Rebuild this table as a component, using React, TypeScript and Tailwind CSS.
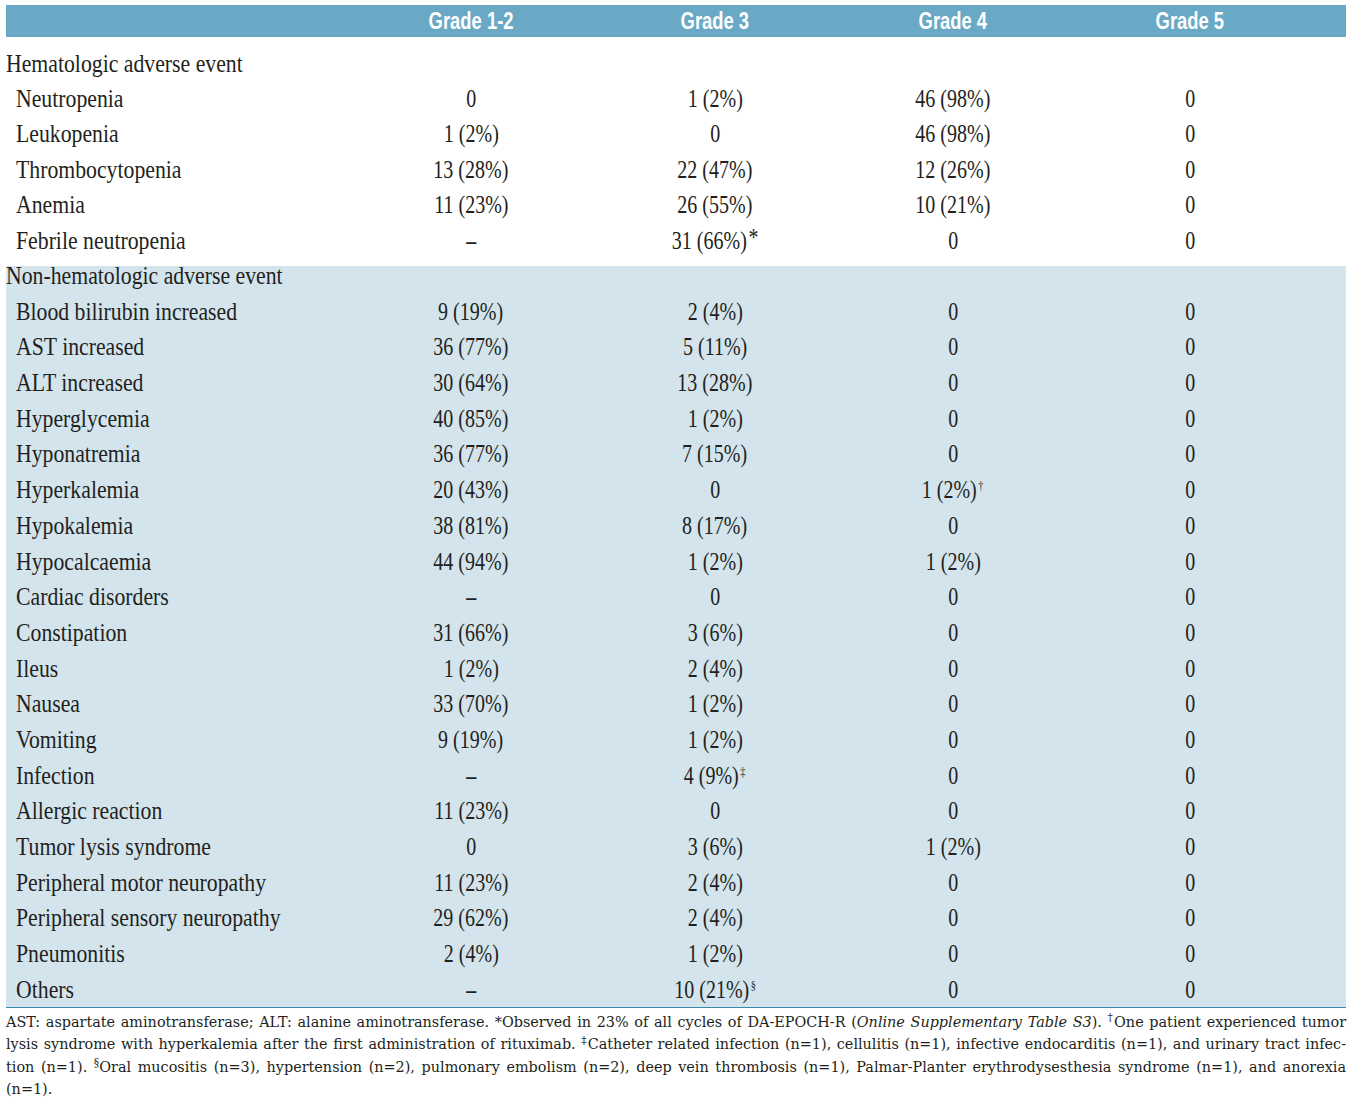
import React from "react";

type Row = { label: string; section?: boolean; cells?: React.ReactNode[] };

const Sup = ({ c }: { c: string }) => (
  <span className="relative -top-[8px] ml-[2px] text-[13px]">{c}</span>
);

const Dash = () => <span className="font-bold">–</span>;

const white: Row[] = [
  { label: "Hematologic adverse event", section: true },
  { label: "Neutropenia", cells: ["0", "1 (2%)", "46 (98%)", "0"] },
  { label: "Leukopenia", cells: ["1 (2%)", "0", "46 (98%)", "0"] },
  { label: "Thrombocytopenia", cells: ["13 (28%)", "22 (47%)", "12 (26%)", "0"] },
  { label: "Anemia", cells: ["11 (23%)", "26 (55%)", "10 (21%)", "0"] },
  {
    label: "Febrile neutropenia",
    cells: [
      <Dash />,
      <>
        31 (66%)<span className="relative -top-[3px] ml-[2px]">*</span>
      </>,
      "0",
      "0",
    ],
  },
];

const light: Row[] = [
  { label: "Non-hematologic adverse event", section: true },
  { label: "Blood bilirubin increased", cells: ["9 (19%)", "2 (4%)", "0", "0"] },
  { label: "AST increased", cells: ["36 (77%)", "5 (11%)", "0", "0"] },
  { label: "ALT increased", cells: ["30 (64%)", "13 (28%)", "0", "0"] },
  { label: "Hyperglycemia", cells: ["40 (85%)", "1 (2%)", "0", "0"] },
  { label: "Hyponatremia", cells: ["36 (77%)", "7 (15%)", "0", "0"] },
  {
    label: "Hyperkalemia",
    cells: [
      "20 (43%)",
      "0",
      <>
        1 (2%)
        <Sup c="†" />
      </>,
      "0",
    ],
  },
  { label: "Hypokalemia", cells: ["38 (81%)", "8 (17%)", "0", "0"] },
  { label: "Hypocalcaemia", cells: ["44 (94%)", "1 (2%)", "1 (2%)", "0"] },
  { label: "Cardiac disorders", cells: [<Dash />, "0", "0", "0"] },
  { label: "Constipation", cells: ["31 (66%)", "3 (6%)", "0", "0"] },
  { label: "Ileus", cells: ["1 (2%)", "2 (4%)", "0", "0"] },
  { label: "Nausea", cells: ["33 (70%)", "1 (2%)", "0", "0"] },
  { label: "Vomiting", cells: ["9 (19%)", "1 (2%)", "0", "0"] },
  {
    label: "Infection",
    cells: [
      <Dash />,
      <>
        4 (9%)
        <Sup c="‡" />
      </>,
      "0",
      "0",
    ],
  },
  { label: "Allergic reaction", cells: ["11 (23%)", "0", "0", "0"] },
  { label: "Tumor lysis syndrome", cells: ["0", "3 (6%)", "1 (2%)", "0"] },
  { label: "Peripheral motor neuropathy", cells: ["11 (23%)", "2 (4%)", "0", "0"] },
  { label: "Peripheral sensory neuropathy", cells: ["29 (62%)", "2 (4%)", "0", "0"] },
  { label: "Pneumonitis", cells: ["2 (4%)", "1 (2%)", "0", "0"] },
  {
    label: "Others",
    cells: [
      <Dash />,
      <>
        10 (21%)
        <Sup c="§" />
      </>,
      "0",
      "0",
    ],
  },
];

const GRID = "grid grid-cols-[346px_238px_250px_226px_248px_1fr]";

function TableRow({ row, h }: { row: Row; h: string }) {
  return (
    <div className={`${GRID} ${h} leading-[17.7px]`}>
      <div className={row.section ? "pl-0" : "pl-[10px]"}>
        <span className="inline-block origin-left scale-x-[0.87] whitespace-nowrap">{row.label}</span>
      </div>
      {row.cells
        ? row.cells.map((c, i) => (
            <div key={i} className="text-center">
              <span className="inline-block origin-center scale-x-[0.8] whitespace-nowrap">{c}</span>
            </div>
          ))
        : null}
    </div>
  );
}

export default function App() {
  return (
    <div className="w-[1354px] h-[1104px] bg-white pl-[6px] pr-[8px] pt-[5px] text-[#231f20]">
      {/* header */}
      <div className={`${GRID} h-[32px] items-center bg-[#69a9c5] font-['Liberation_Sans',Arial,sans-serif] text-[23px] font-bold text-white`}>
        <div />
        {["Grade 1-2", "Grade 3", "Grade 4", "Grade 5"].map((g) => (
          <div key={g} className="text-center leading-[32px]">
            <span className="inline-block scale-x-[0.8] whitespace-nowrap">{g}</span>
          </div>
        ))}
      </div>

      <div className="font-['Liberation_Serif','Times_New_Roman',serif] text-[25px]">
        {/* white section */}
        <div className="pt-[17.7px]">
          {white.map((r, i) => (
            <TableRow key={r.label} row={r} h={i === white.length - 1 ? "h-[34.4px]" : "h-[35.4px]"} />
          ))}
        </div>
        {/* light section */}
        <div className="bg-[#d3e4ed] border-b border-[#3b88a7] pt-px">
          {light.map((r, i) => (
            <TableRow key={r.label} row={r} h={i === light.length - 1 ? "h-[26px]" : "h-[35.7px]"} />
          ))}
        </div>
      </div>

      {/* footnote */}
      <div className="pt-[3px] font-['DejaVu_Serif',serif] text-[14.4px] leading-[22.5px] text-[#231f20]">
        <p className="text-justify [text-align-last:justify] whitespace-nowrap">
          AST: aspartate aminotransferase; ALT: alanine aminotransferase. *Observed in 23% of all cycles of DA-EPOCH-R (
          <i>Online Supplementary Table S3</i>). <sup>†</sup>One patient experienced tumor
        </p>
        <p className="text-justify [text-align-last:justify] whitespace-nowrap">
          lysis syndrome with hyperkalemia after the first administration of rituximab. <sup>‡</sup>Catheter related infection
          (n=1), cellulitis (n=1), infective endocarditis (n=1), and urinary tract infec-
        </p>
        <p className="text-justify [text-align-last:justify] whitespace-nowrap">
          tion (n=1). <sup>§</sup>Oral mucositis (n=3), hypertension (n=2), pulmonary embolism (n=2), deep vein thrombosis
          (n=1), Palmar-Planter erythrodysesthesia syndrome (n=1), and anorexia
        </p>
        <p>(n=1).</p>
      </div>
    </div>
  );
}
